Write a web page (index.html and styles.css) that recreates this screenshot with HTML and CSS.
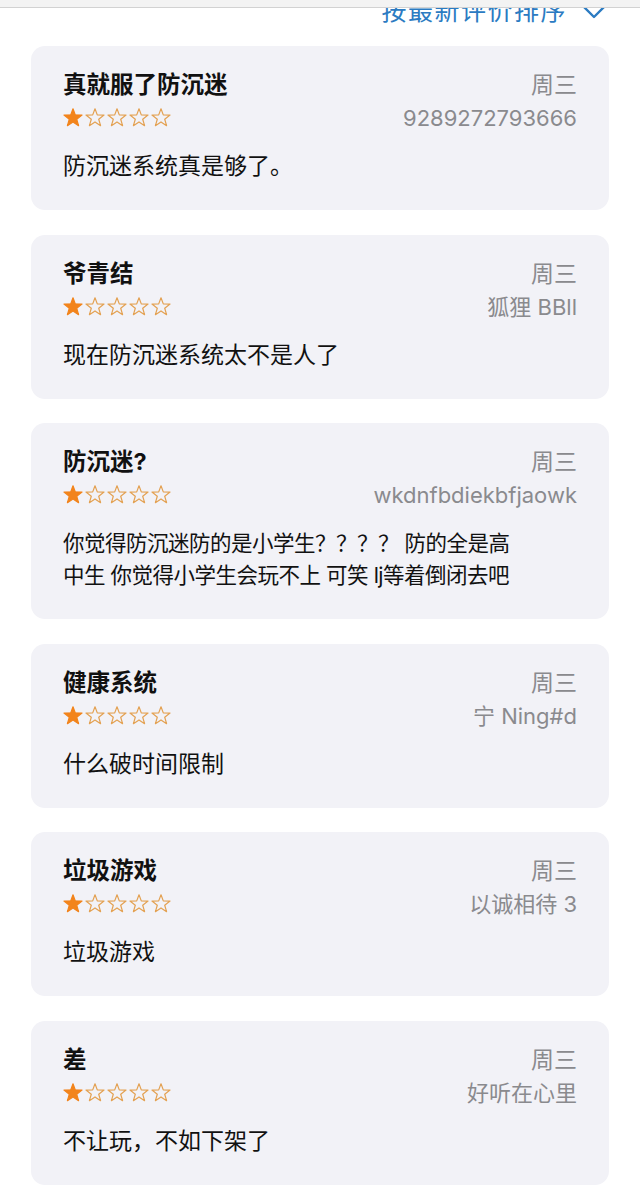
FILE: index.html
```html
<!DOCTYPE html>
<html lang="zh-CN">
<head>
    <meta charset="UTF-8">
    <meta name="viewport" content="width=device-width, initial-scale=1.0">
    <title>评分及评论</title>
    <link rel="stylesheet" href="styles.css">
</head>
<body>
    <svg width="0" height="0" class="defs">
        <symbol id="star" viewBox="0 0 20 20">
            <polygon points="10,0.8 12.29,6.84 19.04,7.06 13.71,11.21 15.58,17.69 10,13.9 4.42,17.69 6.29,11.21 0.96,7.06 7.71,6.84"></polygon>
        </symbol>
    </svg>

    <div class="topbar"></div>

    <div class="sort">
        <span class="sort-label">按最新评价排序</span>
        <svg class="chevron" width="26" height="16" viewBox="0 0 26 16">
            <polyline points="2,2 13,13 24,2"></polyline>
        </svg>
    </div>

    <div class="reviews">
        <div class="card">
            <div class="card-head">
                <div class="left">
                    <div class="title">真就服了防沉迷</div>
                    <div class="stars">
                        <svg class="on"><use href="#star"></use></svg>
                        <svg><use href="#star"></use></svg>
                        <svg><use href="#star"></use></svg>
                        <svg><use href="#star"></use></svg>
                        <svg><use href="#star"></use></svg>
                    </div>
                </div>
                <div class="right">
                    <div class="date">周三</div>
                    <div class="author">9289272793666</div>
                </div>
            </div>
            <p class="body">防沉迷系统真是够了。</p>
        </div>

        <div class="card">
            <div class="card-head">
                <div class="left">
                    <div class="title">爷青结</div>
                    <div class="stars">
                        <svg class="on"><use href="#star"></use></svg>
                        <svg><use href="#star"></use></svg>
                        <svg><use href="#star"></use></svg>
                        <svg><use href="#star"></use></svg>
                        <svg><use href="#star"></use></svg>
                    </div>
                </div>
                <div class="right">
                    <div class="date">周三</div>
                    <div class="author">狐狸 BBll</div>
                </div>
            </div>
            <p class="body">现在防沉迷系统太不是人了</p>
        </div>

        <div class="card">
            <div class="card-head">
                <div class="left">
                    <div class="title">防沉迷?</div>
                    <div class="stars">
                        <svg class="on"><use href="#star"></use></svg>
                        <svg><use href="#star"></use></svg>
                        <svg><use href="#star"></use></svg>
                        <svg><use href="#star"></use></svg>
                        <svg><use href="#star"></use></svg>
                    </div>
                </div>
                <div class="right">
                    <div class="date">周三</div>
                    <div class="author">wkdnfbdiekbfjaowk</div>
                </div>
            </div>
            <p class="body tight">你觉得防沉迷防的是小学生？？？？ 防的全是高<br>中生 你觉得小学生会玩不上 可笑 lj等着倒闭去吧</p>
        </div>

        <div class="card">
            <div class="card-head">
                <div class="left">
                    <div class="title">健康系统</div>
                    <div class="stars">
                        <svg class="on"><use href="#star"></use></svg>
                        <svg><use href="#star"></use></svg>
                        <svg><use href="#star"></use></svg>
                        <svg><use href="#star"></use></svg>
                        <svg><use href="#star"></use></svg>
                    </div>
                </div>
                <div class="right">
                    <div class="date">周三</div>
                    <div class="author">宁 Ning#d</div>
                </div>
            </div>
            <p class="body">什么破时间限制</p>
        </div>

        <div class="card">
            <div class="card-head">
                <div class="left">
                    <div class="title">垃圾游戏</div>
                    <div class="stars">
                        <svg class="on"><use href="#star"></use></svg>
                        <svg><use href="#star"></use></svg>
                        <svg><use href="#star"></use></svg>
                        <svg><use href="#star"></use></svg>
                        <svg><use href="#star"></use></svg>
                    </div>
                </div>
                <div class="right">
                    <div class="date">周三</div>
                    <div class="author">以诚相待 3</div>
                </div>
            </div>
            <p class="body">垃圾游戏</p>
        </div>

        <div class="card">
            <div class="card-head">
                <div class="left">
                    <div class="title">差</div>
                    <div class="stars">
                        <svg class="on"><use href="#star"></use></svg>
                        <svg><use href="#star"></use></svg>
                        <svg><use href="#star"></use></svg>
                        <svg><use href="#star"></use></svg>
                        <svg><use href="#star"></use></svg>
                    </div>
                </div>
                <div class="right">
                    <div class="date">周三</div>
                    <div class="author">好听在心里</div>
                </div>
            </div>
            <p class="body">不让玩，不如下架了</p>
        </div>
    </div>
</body>
</html>
```

FILE: styles.css
```css
body {
    margin: 0;
    padding: 0;
    background-color: #fff;
    color: #111;
    font-family: "Inter", "Noto Sans CJK SC", sans-serif;
}

.defs {
    position: absolute;
}

.topbar {
    height: 7px;
    background-color: #f3f3f3;
    border-bottom: 1px solid #d2d2d2;
}

.sort {
    height: 18px;
    overflow: hidden;
    display: flex;
    justify-content: flex-end;
    align-items: flex-end;
    gap: 14px;
    padding-right: 33px;
}

.sort-label {
    font-size: 25px;
    line-height: 30px;
    color: #2b7bc2;
    letter-spacing: 1.5px;
}

.chevron {
    flex-shrink: 0;
    margin-bottom: 6px;
}

.chevron polyline {
    fill: none;
    stroke: #2b7bc2;
    stroke-width: 2.4;
    stroke-linecap: round;
    stroke-linejoin: round;
}

.reviews {
    display: flex;
    flex-direction: column;
    gap: 24.6px;
    padding: 20px 31px 16px;
}

.card {
    background-color: #f2f2f7;
    border-radius: 14px;
    padding: 25px 32px 28px;
}

.card-head {
    display: flex;
    justify-content: space-between;
}

.title {
    font-size: 23.5px;
    line-height: 28px;
    font-weight: bold;
    color: #111;
}

.stars {
    display: flex;
    gap: 2px;
    margin-top: 9px;
    height: 20px;
}

.stars svg {
    width: 20px;
    height: 20px;
    fill: none;
    stroke: #e3a152;
    stroke-width: 1.2;
    stroke-linejoin: round;
}

.stars svg.on {
    fill: #f2841c;
    stroke: #f2841c;
}

.right {
    text-align: right;
    color: #8a8a8e;
    font-size: 23px;
}

.date {
    line-height: 28px;
}

.author {
    font-size: 22px;
    line-height: 28px;
    margin-top: 5px;
}

.body {
    margin: 18px 0 0;
    font-size: 23px;
    line-height: 32px;
    color: #111;
}

.body.tight {
    font-size: 21.5px;
    letter-spacing: -0.5px;
}
```
